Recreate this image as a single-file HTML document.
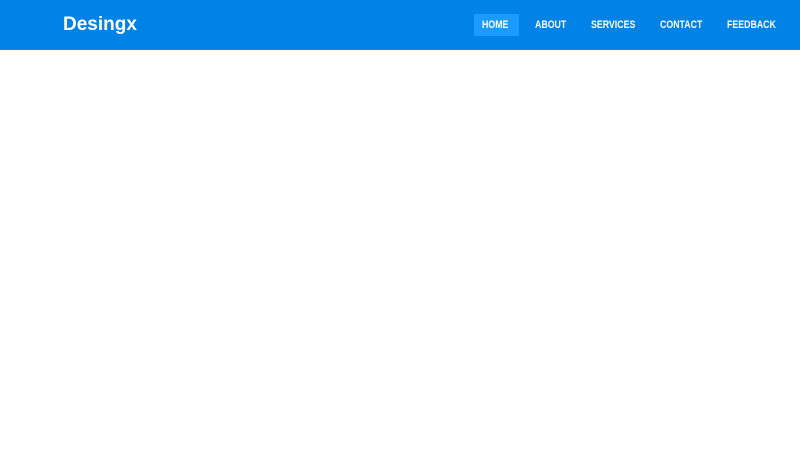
<!DOCTYPE html>
<html><head><meta charset="utf-8"><style>
*{margin:0;padding:0;box-sizing:border-box}
body{width:800px;height:450px;background:#fff;font-family:"Liberation Sans",sans-serif;overflow:hidden}
.hdr{position:absolute;left:0;top:0;width:800px;height:50px;background:#0082e6}
.logo{position:absolute;left:63px;top:12px;color:#fff;font-weight:bold;font-size:19px;line-height:26px}
.act{position:absolute;left:474px;top:14px;width:45px;height:22px;background:#1b9bff}
.nav a{position:absolute;top:14px;height:22px;line-height:22px;color:#fff;font-weight:bold;font-size:11px;text-decoration:none;white-space:nowrap;transform:scaleX(0.8);transform-origin:left center}
</style></head><body>
<div class="hdr">
<div class="logo">Desingx</div>
<div class="act"></div>
<div class="nav">
<a style="left:482px">HOME</a>
<a style="left:535px">ABOUT</a>
<a style="left:591px">SERVICES</a>
<a style="left:660px">CONTACT</a>
<a style="left:727px">FEEDBACK</a>
</div></div>
</body></html>
